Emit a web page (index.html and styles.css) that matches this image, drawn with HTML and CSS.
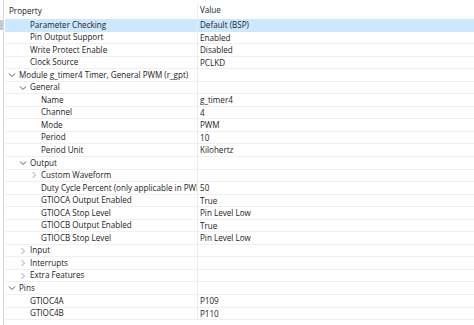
FILE: index.html
```html
<!DOCTYPE html>
<html>
<head>
    <meta charset="UTF-8">
    <title>Properties</title>
    <link rel="stylesheet" href="styles.css">
</head>

<body>
<div class="panel">
    <div class="edge"><div class="edge__thumb"></div></div>
    <div class="table">
        <div class="row head">
            <div class="name">Property</div>
            <div class="value">Value</div>
        </div>
        <div class="row selected">
            <div class="name lv1">Parameter Checking</div>
            <div class="value">Default (BSP)</div>
        </div>
        <div class="row">
            <div class="name lv1">Pin Output Support</div>
            <div class="value">Enabled</div>
        </div>
        <div class="row">
            <div class="name lv1">Write Protect Enable</div>
            <div class="value">Disabled</div>
        </div>
        <div class="row">
            <div class="name lv1">Clock Source</div>
            <div class="value">PCLKD</div>
        </div>
        <div class="row">
            <div class="name lv0"><svg class="arrow" viewBox="0 0 8 8"><polyline points="1,2.5 4,5.5 7,2.5"/></svg>Module g_timer4 Timer, General PWM (r_gpt)</div>
            <div class="value"></div>
        </div>
        <div class="row">
            <div class="name lv1"><svg class="arrow" viewBox="0 0 8 8"><polyline points="1,2.5 4,5.5 7,2.5"/></svg>General</div>
            <div class="value"></div>
        </div>
        <div class="row">
            <div class="name lv2">Name</div>
            <div class="value">g_timer4</div>
        </div>
        <div class="row">
            <div class="name lv2">Channel</div>
            <div class="value">4</div>
        </div>
        <div class="row">
            <div class="name lv2">Mode</div>
            <div class="value">PWM</div>
        </div>
        <div class="row">
            <div class="name lv2">Period</div>
            <div class="value">10</div>
        </div>
        <div class="row">
            <div class="name lv2">Period Unit</div>
            <div class="value">Kilohertz</div>
        </div>
        <div class="row">
            <div class="name lv1"><svg class="arrow" viewBox="0 0 8 8"><polyline points="1,2.5 4,5.5 7,2.5"/></svg>Output</div>
            <div class="value"></div>
        </div>
        <div class="row">
            <div class="name lv2"><svg class="arrow shut" viewBox="0 0 8 8"><polyline points="2.5,1 5.5,4 2.5,7"/></svg>Custom Waveform</div>
            <div class="value"></div>
        </div>
        <div class="row">
            <div class="name lv2"><span class="clip">Duty Cycle Percent (only applicable in PWM mode)</span></div>
            <div class="value">50</div>
        </div>
        <div class="row">
            <div class="name lv2">GTIOCA Output Enabled</div>
            <div class="value">True</div>
        </div>
        <div class="row">
            <div class="name lv2">GTIOCA Stop Level</div>
            <div class="value">Pin Level Low</div>
        </div>
        <div class="row">
            <div class="name lv2">GTIOCB Output Enabled</div>
            <div class="value">True</div>
        </div>
        <div class="row">
            <div class="name lv2">GTIOCB Stop Level</div>
            <div class="value">Pin Level Low</div>
        </div>
        <div class="row">
            <div class="name lv1"><svg class="arrow shut" viewBox="0 0 8 8"><polyline points="2.5,1 5.5,4 2.5,7"/></svg>Input</div>
            <div class="value"></div>
        </div>
        <div class="row">
            <div class="name lv1"><svg class="arrow shut" viewBox="0 0 8 8"><polyline points="2.5,1 5.5,4 2.5,7"/></svg>Interrupts</div>
            <div class="value"></div>
        </div>
        <div class="row">
            <div class="name lv1"><svg class="arrow shut" viewBox="0 0 8 8"><polyline points="2.5,1 5.5,4 2.5,7"/></svg>Extra Features</div>
            <div class="value"></div>
        </div>
        <div class="row">
            <div class="name lv0"><svg class="arrow" viewBox="0 0 8 8"><polyline points="1,2.5 4,5.5 7,2.5"/></svg>Pins</div>
            <div class="value"></div>
        </div>
        <div class="row">
            <div class="name lv1">GTIOC4A</div>
            <div class="value">P109</div>
        </div>
        <div class="row">
            <div class="name lv1">GTIOC4B</div>
            <div class="value">P110</div>
        </div>
    </div>
</div>
</body>
</html>
```

FILE: styles.css
```css
* {
    padding: 0;
    margin: 0;
    box-sizing: border-box;
}

html, body {
    height: 100%;
}

body {
    font-family: "Open Sans", "Noto Sans", sans-serif;
    font-size: 8.1px;
    color: #222222;
    background-color: white;
    overflow: hidden;
}

.panel {
    display: flex;
    height: 100%;
}

.edge {
    width: 4px;
    border-right: 1px solid #d6d6d6;
    padding-top: 20px;
}

.edge__thumb {
    height: 10px;
    background-color: #c8c8c8;
}

.table {
    flex: 1;
    padding-left: 1px;
}

.row {
    display: flex;
    height: 12.55px;
    line-height: 12.55px;
    border-bottom: 1px solid #f0f0f0;
}

.row.head {
    height: 19px;
    padding-top: 3px;
    line-height: 14px;
    border-bottom: none;
}

.row.selected {
    background-color: #cce8ff;
    border-bottom-color: #cce8ff;
}

.name {
    width: 193px;
    flex-shrink: 0;
    display: flex;
    align-items: center;
    white-space: nowrap;
    overflow: hidden;
    border-right: 1px solid #ececec;
}

.name .clip {
    overflow: hidden;
    min-width: 0;
}

.head .name {
    padding-left: 4px;
}

.value {
    flex: 1;
    padding-left: 2px;
    white-space: nowrap;
}

.lv0 {
    padding-left: 3px;
}

.lv1 {
    padding-left: 25px;
}

.lv2 {
    padding-left: 36px;
}

.arrow {
    width: 8px;
    height: 8px;
    flex-shrink: 0;
    margin-left: -11px;
    margin-right: 3px;
    fill: none;
    stroke: #555555;
    stroke-width: 1;
}

.lv0 .arrow {
    margin-left: 0;
}

.arrow.shut {
    stroke: #a0a0a0;
}
```
